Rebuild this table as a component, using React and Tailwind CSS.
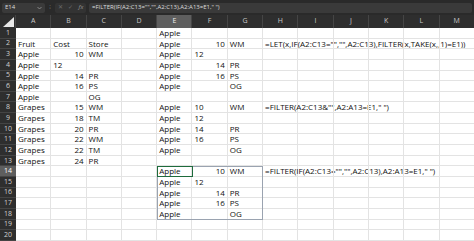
import React from "react";

const COLS = ["A","B","C","D","E","F","G","H","I","J","K","L","M"];
const R = (t) => ({ t, a: "r" });
const L = (t) => ({ t, a: "l" });

const data = {
  1: { E: L("Apple") },
  2: { A: L("Fruit"), B: L("Cost"), C: L("Store"), E: L("Apple"), F: R("10"), G: L("WM"), H: L('=LET(x,IF(A2:C13="","",A2:C13),FILTER(x,TAKE(x,,1)=E1))') },
  3: { A: L("Apple"), B: R("10"), C: L("WM"), E: L("Apple"), F: L("12") },
  4: { A: L("Apple"), B: L("12"), E: L("Apple"), F: R("14"), G: L("PR") },
  5: { A: L("Apple"), B: R("14"), C: L("PR"), E: L("Apple"), F: R("16"), G: L("PS") },
  6: { A: L("Apple"), B: R("16"), C: L("PS"), E: L("Apple"), G: L("OG") },
  7: { A: L("Apple"), C: L("OG") },
  8: { A: L("Grapes"), B: R("15"), C: L("WM"), E: L("Apple"), F: L("10"), G: L("WM"), H: L('=FILTER(A2:C13&"",A2:A13=E1," ")') },
  9: { A: L("Grapes"), B: R("18"), C: L("TM"), E: L("Apple"), F: L("12") },
  10: { A: L("Grapes"), B: R("20"), C: L("PR"), E: L("Apple"), F: L("14"), G: L("PR") },
  11: { A: L("Grapes"), B: R("22"), C: L("WM"), E: L("Apple"), F: L("16"), G: L("PS") },
  12: { A: L("Grapes"), B: R("22"), C: L("TM"), E: L("Apple"), G: L("OG") },
  13: { A: L("Grapes"), B: R("24"), C: L("PR") },
  14: { E: L("Apple"), F: R("10"), G: L("WM"), H: L('=FILTER(IF(A2:C13="","",A2:C13),A2:A13=E1," ")') },
  15: { E: L("Apple"), F: L("12") },
  16: { E: L("Apple"), F: R("14"), G: L("PR") },
  17: { E: L("Apple"), F: R("16"), G: L("PS") },
  18: { E: L("Apple"), G: L("OG") },
};

const rows = Array.from({ length: 20 }, (_, i) => i + 1);

export default function App() {
  return (
    <div className="w-[474px] h-[241px] overflow-hidden bg-white" style={{ fontFamily: '"Open Sans", "Noto Sans", sans-serif' }}>
      {/* formula bar */}
      <div className="h-[15px] bg-[#2a2a2a] flex items-center gap-[3px] px-[2px] text-[6px] text-[#dcdcdc]">
        <div className="w-[43px] h-[10px] bg-[#3a3a3a] rounded-[2px] flex items-center justify-between px-[3px]">
          <span>E14</span>
          <svg width="5" height="4" viewBox="0 0 5 4"><path d="M0.5 1 L2.5 3 L4.5 1" stroke="#9a9a9a" strokeWidth="0.8" fill="none" /></svg>
        </div>
        <span className="text-[#777] w-[4px] text-center">⁝</span>
        <div className="w-[31px] h-[10px] bg-[#333] rounded-[2px] flex items-center justify-around text-[#6a6a6a]">
          <span>✕</span><span>✓</span><span className="italic text-[#9a9a9a]">fx</span>
        </div>
        <div className="flex-1 h-[10px] bg-[#3a3a3a] rounded-[2px] flex items-center px-[3px] whitespace-nowrap overflow-hidden">
          =FILTER(IF(A2:C13="","",A2:C13),A2:A13=E1," ")
        </div>
      </div>
      {/* column headers */}
      <div className="flex h-[13px] bg-[#2e2e2e] text-[7px] text-[#c8c8c8]">
        <div className="w-[16px] shrink-0 flex items-end justify-end p-[1px] border-r border-[#444]">
          <svg width="11" height="10" viewBox="0 0 11 10"><polygon points="11,0 11,10 0,10" fill="#e8e8e8" /></svg>
        </div>
        {COLS.map((c) => (
          <div key={c} className={`w-[35.3px] shrink-0 flex items-center justify-center border-r border-[#454545] ${c === "E" ? "bg-[#5e5e5e] text-[#eee]" : ""}`}>{c}</div>
        ))}
      </div>
      {/* grid */}
      <div className="relative">
        {rows.map((r) => (
          <div key={r} className="flex h-[10.65px]">
            <div className={`w-[16px] shrink-0 flex items-center justify-center text-[7px] leading-[10px] border-b border-[#444] ${r === 14 ? "bg-[#5e5e5e] text-white" : "bg-[#2e2e2e] text-[#d0d0d0]"}`}>{r}</div>
            {COLS.map((c) => {
              const cell = data[r] && data[r][c];
              return (
                <div key={c} className="w-[35.3px] shrink-0 relative border-r border-b border-[#e3e3e3]">
                  {cell && (
                    <span className={`absolute top-[-1px] text-[8px] leading-[11px] text-[#111] whitespace-nowrap ${cell.a === "r" ? "right-[2px]" : "left-[2px]"}`}>{cell.t}</span>
                  )}
                </div>
              );
            })}
          </div>
        ))}
        {/* selection range E14:G18 */}
        <div className="absolute left-[157.2px] top-[138.45px] w-[105.9px] h-[53.25px] border border-[#9aa3b0] pointer-events-none" />
        <div className="absolute left-[157.2px] top-[138.45px] w-[35.8px] h-[10.9px] border-[1.5px] border-[#1e6b3c] pointer-events-none" />
      </div>
    </div>
  );
}
